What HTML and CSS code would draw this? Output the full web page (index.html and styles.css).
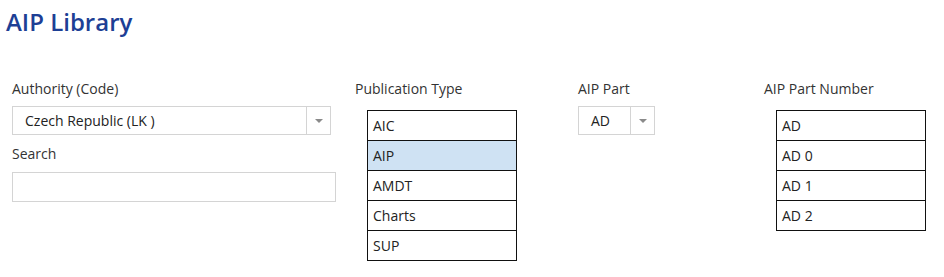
FILE: index.html
```html
<!DOCTYPE html>
<html>
<head>
<meta charset="utf-8">
<link rel="stylesheet" href="styles.css">
</head>
<body>
<h1 class="title">AIP Library</h1>
<div class="filters">
  <div class="col col-auth">
    <div class="label">Authority (Code)</div>
    <div class="select select-wide">
      <span class="select-value">Czech Republic (LK )</span>
      <span class="select-arrow"><span class="caret"></span></span>
    </div>
    <div class="label label-search">Search</div>
    <div class="input"></div>
  </div>
  <div class="col col-pub">
    <div class="label">Publication Type</div>
    <ul class="list list-pub">
      <li>AIC</li>
      <li class="selected">AIP</li>
      <li>AMDT</li>
      <li>Charts</li>
      <li>SUP</li>
    </ul>
  </div>
  <div class="col col-part">
    <div class="label">AIP Part</div>
    <div class="select select-small">
      <span class="select-value">AD</span>
      <span class="select-arrow"><span class="caret"></span></span>
    </div>
  </div>
  <div class="col col-num">
    <div class="label">AIP Part Number</div>
    <ul class="list list-num">
      <li>AD</li>
      <li>AD 0</li>
      <li>AD 1</li>
      <li>AD 2</li>
    </ul>
  </div>
</div>
</body>
</html>
```
FILE: styles.css
```css
html, body {
  margin: 0;
  padding: 0;
  background: #fff;
}
body {
  font-family: "Open Sans", "Noto Sans", sans-serif;
  font-size: 14px;
  color: #333;
}
.title {
  margin: 0;
  padding: 5px 0 0 6px;
  font-size: 24px;
  font-weight: 600;
  line-height: 34px;
  color: #1d3f95;
}
.filters {
  display: flex;
  padding: 40px 0 0 12px;
}
.col-auth { width: 324px; }
.col-pub { width: 223px; margin-left: 19px; }
.col-part { width: 186px; }
.col-num { width: 160px; }
.label {
  line-height: 20px;
  height: 20px;
}
.select {
  margin-top: 7px;
  height: 27px;
  border: 1px solid #d4d4d4;
  display: flex;
  align-items: center;
  box-sizing: content-box;
}
.select-wide { width: 317px; }
.select-small { width: 75px; }
.select-value {
  flex: 1;
  padding-left: 12px;
  color: #222;
}
.select-arrow {
  width: 23px;
  height: 100%;
  border-left: 1px solid #d4d4d4;
  display: flex;
  align-items: center;
  justify-content: center;
}
.caret {
  width: 0;
  height: 0;
  border-left: 4px solid transparent;
  border-right: 4px solid transparent;
  border-top: 4px solid #8a8a8a;
}
.label-search {
  margin-top: 9px;
}
.input {
  margin-top: 8px;
  width: 322px;
  height: 28px;
  border: 1px solid #d4d4d4;
}
.list {
  list-style: none;
  margin: 11px 0 0 12px;
  padding: 0;
  border: 1px solid #111;
  border-top: none;
  width: 148px;
}
.list li {
  height: 29px;
  line-height: 29px;
  border-top: 1px solid #111;
  padding-left: 5px;
  color: #222;
}
.list li.selected {
  background: #cfe2f3;
}
```
